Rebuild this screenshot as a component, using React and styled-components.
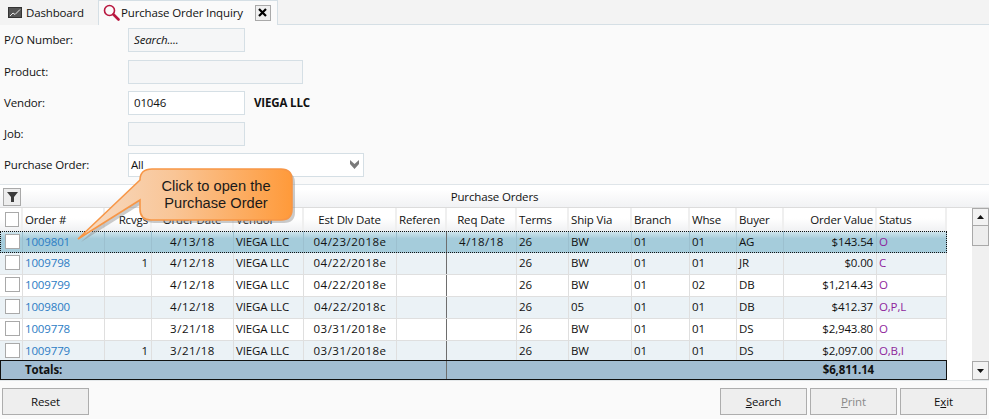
import React from 'react'
import styled, { createGlobalStyle } from 'styled-components'

const UI_FONT = `"Open Sans", "Noto Sans", sans-serif`
const COLUMNS = '23px 82px 47px 82px 70px 93px 50px 70px 52px 63px 58px 47px 47px 93px 70px'

const headers = [
  { label: '', check: true },
  { label: 'Order #' },
  { label: 'Rcvgs', right: true },
  { label: 'Order Date', center: true },
  { label: 'Vendor' },
  { label: 'Est Dlv Date', center: true },
  { label: 'Referen' },
  { label: 'Req Date', center: true },
  { label: 'Terms' },
  { label: 'Ship Via' },
  { label: 'Branch' },
  { label: 'Whse' },
  { label: 'Buyer' },
  { label: 'Order Value', right: true },
  { label: 'Status' },
]

const rows = [
  ['1009801', '', '4/13/18', '04/23/2018e', '4/18/18', '26', 'BW', '01', '01', 'AG', '$143.54', 'O'],
  ['1009798', '1', '4/12/18', '04/22/2018e', '', '26', 'BW', '01', '01', 'JR', '$0.00', 'C'],
  ['1009799', '', '4/12/18', '04/22/2018e', '', '26', 'BW', '01', '02', 'DB', '$1,214.43', 'O'],
  ['1009800', '', '4/12/18', '04/22/2018c', '', '26', '05', '01', '01', 'DB', '$412.37', 'O,P,L'],
  ['1009778', '', '3/21/18', '03/31/2018e', '', '26', 'BW', '01', '01', 'DS', '$2,943.80', 'O'],
  ['1009779', '1', '3/21/18', '03/31/2018e', '', '26', 'BW', '01', '01', 'DS', '$2,097.00', 'O,B,I'],
]

const GlobalStyle = createGlobalStyle`
  html, body { margin: 0; padding: 0; background: #fafafa; }
  body {
    font-family: ${UI_FONT};
    font-size: 11.5px;
    letter-spacing: -0.15px;
    color: #111;
  }
`

const Page = styled.div`
  position: relative;
  width: 989px;
  height: 419px;
  overflow: hidden;
  background: #fafafa;
`
const TabBar = styled.div`
  display: flex;
  height: 25px;
  box-sizing: border-box;
  background: #f3f3f3;
  border-bottom: 1px solid #d5dfe5;
`
const Tab = styled.div`
  display: flex;
  align-items: center;
  height: 25px;
  box-sizing: border-box;
  width: ${p => (p.$active ? '180px' : '98px')};
  padding-left: ${p => (p.$active ? '4px' : '8px')};
  padding-bottom: 1px;
  gap: ${p => (p.$active ? '1px' : '4px')};
  background: ${p => (p.$active ? '#fafafa' : '#f3f3f3')};
  border: ${p => (p.$active ? '1px solid #d5dfe5' : 'none')};
  border-bottom: none;
  white-space: nowrap;
`
const CloseBox = styled.div`
  display: flex;
  align-items: center;
  justify-content: center;
  width: 16px;
  height: 16px;
  box-sizing: border-box;
  margin-left: 11px;
  border: 1px solid #a9a9a9;
  background: #f0f0f0;
`
const Form = styled.div`
  display: flex;
  flex-direction: column;
  gap: 7px;
  height: 159px;
  padding-top: 3px;
  box-sizing: border-box;
`
const FormRow = styled.div`
  display: flex;
  align-items: center;
  height: 24px;
  padding-left: 4px;
  &:first-child {
    margin-bottom: 1px;
  }
`
const Label = styled.div`
  width: 124px;
  padding-bottom: 2px;
`
const Field = styled.div`
  display: flex;
  align-items: center;
  justify-content: space-between;
  box-sizing: border-box;
  width: ${p => p.$width}px;
  height: 24px;
  padding: 0 ${p => (p.$tight ? '4px' : '5px')} 2px ${p => (p.$tight ? '2px' : '5px')};
  background: ${p => (p.$filled ? '#f5f6f7' : '#fff')};
  border: 1px solid #d5dfe5;
  font-style: ${p => (p.$italic ? 'italic' : 'normal')};
`
const VendorName = styled.div`
  margin-left: 9px;
  padding-bottom: 2px;
  font-weight: 700;
`
const GridTitle = styled.div`
  position: relative;
  display: flex;
  align-items: center;
  justify-content: center;
  height: 24px;
  box-sizing: border-box;
  border-top: 1px solid #dfe5e9;
  border-bottom: 1px solid #dcdcdc;
  background: linear-gradient(#ffffff 20%, #f1f2f4);
`
const FilterButton = styled.div`
  position: absolute;
  left: 3px;
  top: 3px;
  display: flex;
  align-items: center;
  justify-content: center;
  width: 18px;
  height: 18px;
  box-sizing: border-box;
  border: 1px solid #a9a9a9;
  background: #ededed;
`
const GridWrap = styled.div`
  display: flex;
  height: 172px;
  background: #fff;
  border-bottom: 1px solid #e4e8ea;
`
const GridBody = styled.div`
  display: flex;
  flex-direction: column;
  width: 972px;
`
const Row = styled.div`
  display: grid;
  grid-template-columns: ${COLUMNS};
  width: 947px;
  box-sizing: border-box;
`
const HeaderRow = styled(Row)`
  height: 23px;
`
const HeaderCell = styled.div`
  display: flex;
  align-items: center;
  justify-content: ${p => (p.$right ? 'flex-end' : p.$center ? 'center' : 'flex-start')};
  box-sizing: border-box;
  padding: 0 2px;
  border-right: 2px solid #efefef;
  background: linear-gradient(#ffffff 45%, #f0f1f3);
  white-space: nowrap;
  overflow: hidden;
`
const Rows = styled.div`
  height: 129px;
  overflow: hidden;
`
const DataRow = styled(Row)`
  height: 22px;
  background: ${p =>
    p.$selected
      ? 'linear-gradient(#d6e8ee, #a5ccdb 35%, #a5ccdb)'
      : p.$odd
        ? '#ebf2f6'
        : '#ffffff'};
  outline: ${p => (p.$selected ? '1px dotted #111' : 'none')};
  outline-offset: -1px;
  border-bottom: ${p => (p.$selected ? 'none' : '1px solid #dfdfdf')};
`
const Cell = styled.div`
  display: flex;
  align-items: center;
  justify-content: ${p => (p.$right ? 'flex-end' : p.$center ? 'center' : 'flex-start')};
  box-sizing: border-box;
  padding: 0 ${p => (p.$right ? '3px' : '2px')} 2px;
  border-right: 1px solid ${p => (p.$dark ? '#6e6e6e' : p.$selected ? '#9cc0cf' : '#dfdfdf')};
  color: ${p => p.$color || '#111'};
  letter-spacing: ${p => (p.$date ? '0.5px' : 'inherit')};
  white-space: nowrap;
  overflow: hidden;
`
const CheckBox = styled.div`
  width: 13px;
  height: 13px;
  margin-left: 3px;
  background: #fff;
  border: 1px solid #a9a9a9;
`
const Totals = styled.div`
  display: grid;
  grid-template-columns: 446px 1fr 70px;
  width: 947px;
  height: 20px;
  box-sizing: border-box;
  border: 1px solid #111;
  background: #a2bdd2;
  font-weight: 700;
`
const TotalsLabel = styled.div`
  display: flex;
  align-items: center;
  padding: 0 0 2px 24px;
  border-right: 1px solid #6e6e6e;
`
const TotalsValue = styled.div`
  display: flex;
  align-items: center;
  justify-content: flex-end;
  padding: 0 2px 2px 0;
`
const ScrollBar = styled.div`
  display: flex;
  flex-direction: column;
  justify-content: space-between;
  width: 17px;
  box-sizing: border-box;
  background: #f0f0f0;
`
const ScrollTrack = styled.div`
  display: flex;
  flex-direction: column;
`
const ScrollButton = styled.div`
  display: flex;
  align-items: center;
  justify-content: center;
  height: ${p => p.$height}px;
  box-sizing: border-box;
  border: 1px solid #a9a9a9;
  background: ${p => (p.$thumb ? '#ededed' : '#f2f2f2')};
  margin-top: ${p => (p.$thumb ? '-1px' : '0')};
`
const Footer = styled.div`
  display: flex;
  justify-content: space-between;
  padding: 7px 2px 0 2px;
`
const ButtonGroup = styled.div`
  display: flex;
  gap: 3px;
`
const Button = styled.div`
  display: flex;
  align-items: center;
  justify-content: center;
  width: 87px;
  height: 27px;
  box-sizing: border-box;
  border: 1px solid #adadad;
  background: #eeeeee;
  color: ${p => (p.$disabled ? '#8a8a8a' : '#111')};
`
const Underline = styled.span`
  text-decoration: underline;
`
const CalloutWrap = styled.div`
  position: absolute;
  left: 70px;
  top: 165px;
  width: 240px;
  height: 85px;
`
const CalloutText = styled.div`
  position: absolute;
  left: 70px;
  top: 13px;
  width: 152px;
  text-align: center;
  font-family: "Liberation Sans", Arial, sans-serif;
  font-size: 14.67px;
  letter-spacing: 0;
  line-height: 17px;
  color: #1a1a1a;
`

const ChartIcon = () => (
  <svg width="14" height="11" viewBox="0 0 14 11">
    <rect x="0.5" y="0.5" width="13" height="10" fill="#555" stroke="#333" />
    <path d="M2 9 L5 6 L7 7.5 L12 2.5" fill="none" stroke="#e8e8e8" strokeWidth="1" />
  </svg>
)

const SearchIcon = () => (
  <svg width="17" height="17" viewBox="0 0 17 17">
    <circle cx="6.5" cy="6.5" r="5" fill="none" stroke="#b8173f" strokeWidth="1.6" />
    <path d="M10.5 10.5 L15.5 15.5" stroke="#b8173f" strokeWidth="2.6" strokeLinecap="round" />
  </svg>
)

const CloseIcon = () => (
  <svg width="9" height="9" viewBox="0 0 9 9">
    <path d="M1 1 L8 8 M8 1 L1 8" stroke="#000" strokeWidth="2.2" />
  </svg>
)

const ChevronIcon = () => (
  <svg width="9" height="9" viewBox="0 0 9 9">
    <path d="M0 0 L4.5 4 L9 0 L9 4 L4.5 9 L0 4 Z" fill="#7a7a7a" />
  </svg>
)

const FunnelIcon = () => (
  <svg width="11" height="10" viewBox="0 0 11 10">
    <path d="M0 0 H11 L7 5 V10 H4 V5 Z" fill="#3c3c3c" />
  </svg>
)

const Arrow = ({ down }) => (
  <svg width="7" height="4" viewBox="0 0 7 4">
    <path d={down ? 'M0 0 H7 L3.5 4 Z' : 'M0 4 H7 L3.5 0 Z'} fill="#111" />
  </svg>
)

const CALLOUT_PATH =
  'M70 15 Q70 4 82 4 L211 4 Q222 4 222 15 L222 44 Q222 55 211 55 L81 55 Q70 55 70 44 L70 35 L8 74 Z'

const CalloutShape = () => (
  <svg width="240" height="85" viewBox="0 0 240 85">
    <defs>
      <linearGradient id="calloutFill" x1="0" x2="1" y1="0" y2="0">
        <stop offset="0" stopColor="#f6dcc6" />
        <stop offset="0.45" stopColor="#f9c596" />
        <stop offset="1" stopColor="#ff9a3a" />
      </linearGradient>
    </defs>
    <path d={CALLOUT_PATH} fill="#8c8c8c" opacity="0.45" transform="translate(3 3)" />
    <path d={CALLOUT_PATH} fill="url(#calloutFill)" stroke="#f79646" strokeWidth="1.6" />
  </svg>
)

const cellProps = [
  { link: true },
  { right: true },
  { center: true, date: true },
  {},
  { center: true, date: true },
  {},
  { center: true, date: true },
  {},
  {},
  {},
  {},
  {},
  { right: true },
  { status: true },
]

const App = () => {
  return (
    <Page>
      <GlobalStyle />
      <TabBar>
        <Tab>
          <ChartIcon />
          Dashboard
        </Tab>
        <Tab $active>
          <SearchIcon />
          Purchase Order Inquiry
          <CloseBox>
            <CloseIcon />
          </CloseBox>
        </Tab>
      </TabBar>
      <Form>
        <FormRow>
          <Label>P/O Number:</Label>
          <Field $width={117} $filled $italic>Search....</Field>
        </FormRow>
        <FormRow>
          <Label>Product:</Label>
          <Field $width={175} $filled />
        </FormRow>
        <FormRow>
          <Label>Vendor:</Label>
          <Field $width={117}>01046</Field>
          <VendorName>VIEGA LLC</VendorName>
        </FormRow>
        <FormRow>
          <Label>Job:</Label>
          <Field $width={117} $filled />
        </FormRow>
        <FormRow>
          <Label>Purchase Order:</Label>
          <Field $width={236} $tight>
            All
            <ChevronIcon />
          </Field>
        </FormRow>
      </Form>
      <GridTitle>
        <FilterButton>
          <FunnelIcon />
        </FilterButton>
        Purchase Orders
      </GridTitle>
      <GridWrap>
        <GridBody>
          <HeaderRow>
            {headers.map((h, i) => (
              <HeaderCell key={i} $right={h.right} $center={h.center}>
                {h.check ? <CheckBox /> : h.label}
              </HeaderCell>
            ))}
          </HeaderRow>
          <Rows>
            {rows.map((row, r) => {
              const values = [row[0], row[1], row[2], 'VIEGA LLC', row[3], '', ...row.slice(4)]
              return (
                <DataRow key={r} $selected={r === 0} $odd={r % 2 === 1}>
                  <Cell $selected={r === 0}>
                    <CheckBox />
                  </Cell>
                  {values.map((v, i) => {
                    const c = cellProps[i]
                    return (
                      <Cell
                        key={i}
                        $right={c.right}
                        $center={c.center}
                        $date={c.date}
                        $selected={r === 0}
                        $dark={i === 5}
                        $color={c.link ? '#2b7cc4' : c.status ? '#8e1f9b' : undefined}
                      >
                        {v}
                      </Cell>
                    )
                  })}
                </DataRow>
              )
            })}
          </Rows>
          <Totals>
            <TotalsLabel>Totals:</TotalsLabel>
            <TotalsValue>$6,811.14</TotalsValue>
            <div />
          </Totals>
        </GridBody>
        <ScrollBar>
          <ScrollTrack>
            <ScrollButton $height={18}>
              <Arrow />
            </ScrollButton>
            <ScrollButton $height={21} $thumb />
          </ScrollTrack>
          <ScrollButton $height={19}>
            <Arrow down />
          </ScrollButton>
        </ScrollBar>
      </GridWrap>
      <Footer>
        <Button>Reset</Button>
        <ButtonGroup>
          <Button><span><Underline>S</Underline>earch</span></Button>
          <Button $disabled><span><Underline>P</Underline>rint</span></Button>
          <Button><span>E<Underline>x</Underline>it</span></Button>
        </ButtonGroup>
      </Footer>
      <CalloutWrap>
        <CalloutShape />
        <CalloutText>Click to open the Purchase Order</CalloutText>
      </CalloutWrap>
    </Page>
  )
}

export default App
